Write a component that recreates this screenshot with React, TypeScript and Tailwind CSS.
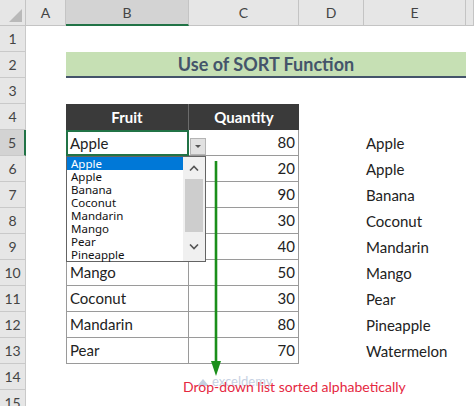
import React from 'react';

const COLS = ['A', 'B', 'C', 'D', 'E', ''];
// rows 6-9 of column B sit under the open drop-down list
const fruits = ['Apple', '', '', '', '', 'Mango', 'Coconut', 'Mandarin', 'Pear'];
const qty = [80, 20, 90, 30, 40, 50, 30, 80, 70];
const sorted = ['Apple', 'Apple', 'Banana', 'Coconut', 'Mandarin', 'Mango', 'Pear', 'Pineapple', 'Watermelon'];
const listItems = ['Apple', 'Apple', 'Banana', 'Coconut', 'Mandarin', 'Mango', 'Pear', 'Pineapple'];

const rowHead = 'flex items-center justify-center border-b border-r border-[#c9c9c9] bg-[#e6e6e6] text-[14px] text-[#444]';

export default function App() {
    const rows = Array.from({ length: 15 }, (_, i) => i + 1);

    return (
        <div className="relative w-[474px] h-[406px] overflow-hidden bg-white" style={{ fontFamily: 'Lato, "Open Sans", sans-serif' }}>
            <div className="grid grid-cols-[26px_40px_123px_110px_65px_102px_1fr] auto-rows-[26px]">
                {/* Corner */}
                <div className="relative border-b border-r border-[#c4c4c4] bg-[#e6e6e6]">
                    <div className="absolute right-[3px] bottom-[3px] w-0 h-0 border-l-[13px] border-l-transparent border-b-[13px] border-b-[#b9b9b9]" />
                </div>
                {COLS.map((c) => (
                    <div
                        key={c || 'F'}
                        className={`flex items-center justify-center border-r text-[14px] text-[#444] ${c === 'B'
                            ? 'bg-[#d3d3d3] border-b-2 border-b-[#217346] border-r-[#c4c4c4]'
                            : 'bg-[#e6e6e6] border-b border-b-[#c4c4c4] border-r-[#c4c4c4]'}`}
                    >
                        {c}
                    </div>
                ))}

                {rows.map((r) => {
                    const head = (
                        <div
                            key={`h${r}`}
                            className={r === 5
                                ? 'flex items-center justify-center border-b border-b-[#c9c9c9] border-r-2 border-r-[#217346] bg-[#d3d3d3] text-[14px] text-[#444]'
                                : rowHead}
                        >
                            {r}
                        </div>
                    );

                    if (r === 2) {
                        return (
                            <React.Fragment key={r}>
                                {head}
                                <div />
                                <div className="col-span-4 flex items-center justify-center bg-[#c6e0b4] border-b-2 border-[#44546a] text-[18px] font-bold text-[#44546a]">
                                    Use of SORT Function
                                </div>
                                <div />
                            </React.Fragment>
                        );
                    }

                    if (r === 4) {
                        return (
                            <React.Fragment key={r}>
                                {head}
                                <div />
                                <div className="flex items-center justify-center bg-[#3a3a3a] border-r border-[#6b6b6b] text-[15px] font-bold text-white">Fruit</div>
                                <div className="flex items-center justify-center bg-[#3a3a3a] text-[15px] font-bold text-white">Quantity</div>
                                <div />
                                <div />
                                <div />
                            </React.Fragment>
                        );
                    }

                    if (r >= 5 && r <= 13) {
                        const i = r - 5;
                        return (
                            <React.Fragment key={r}>
                                {head}
                                <div />
                                <div
                                    className={r === 5
                                        ? 'flex items-center pl-[2px] border-2 border-[#217346] text-[15px] text-[#222]'
                                        : 'flex items-center pl-[3px] border-l border-b border-r border-[#9a9a9a] text-[15px] text-[#222]'}
                                >
                                    {fruits[i]}
                                </div>
                                <div className="flex items-center justify-end pr-[3px] border-b border-r border-[#9a9a9a] text-[15px] text-[#222]">
                                    {qty[i]}
                                </div>
                                <div />
                                <div className="flex items-center pl-[2px] text-[15px] text-[#222]">{sorted[i]}</div>
                                <div />
                            </React.Fragment>
                        );
                    }

                    return (
                        <React.Fragment key={r}>
                            {head}
                            <div /><div /><div /><div /><div /><div />
                        </React.Fragment>
                    );
                })}
            </div>

            {/* Drop-down button */}
            <div className="absolute left-[190px] top-[138px] w-[16px] h-[17px] flex items-center justify-center bg-[#e1e1e1] border border-[#b4b4b4]">
                <div className="w-0 h-0 border-l-[3px] border-r-[3px] border-t-[3px] border-l-transparent border-r-transparent border-t-[#555]" />
            </div>

            {/* Drop-down list */}
            <div className="absolute left-[66px] top-[156px] w-[140px] h-[106px] flex bg-white border border-[#646464]" style={{ fontFamily: '"Noto Sans", sans-serif' }}>
                <div className="flex-1 flex flex-col">
                    {listItems.map((item, i) => (
                        <div
                            key={i}
                            className={`h-[13px] leading-[13px] pl-[4px] text-[11.5px] ${i === 0 ? 'bg-[#0078d7] text-white' : 'text-[#111]'}`}
                        >
                            {item}
                        </div>
                    ))}
                </div>
                <div className="w-[22px] flex flex-col bg-[#f0f0f0]">
                    <div className="h-[22px] flex items-center justify-center">
                        <svg width="10" height="6" viewBox="0 0 10 6" fill="none" stroke="#555" strokeWidth="1.6">
                            <path d="M1 5.5 L5 1.5 L9 5.5" />
                        </svg>
                    </div>
                    <div className="mx-auto w-[18px] h-[53px] bg-[#cdcdcd]" />
                    <div className="flex-1 flex items-center justify-center">
                        <svg width="10" height="6" viewBox="0 0 10 6" fill="none" stroke="#555" strokeWidth="1.6">
                            <path d="M1 0.5 L5 4.5 L9 0.5" />
                        </svg>
                    </div>
                </div>
            </div>

            {/* Green arrow */}
            <svg className="absolute left-[208px] top-[158px]" width="16" height="220" viewBox="0 0 16 220">
                <line x1="8" y1="3" x2="8" y2="206" stroke="#1b8f1b" strokeWidth="2.6" />
                <polygon points="3,203 13,203 8,218" fill="#1b8f1b" />
            </svg>

            {/* Watermark */}
            <div className="absolute left-[196px] top-[372px] flex items-center gap-[2px] text-[13px] text-[#9fb2cf] opacity-60">
                <svg width="14" height="10" viewBox="0 0 14 10">
                    <path d="M1 9 L7 2 L13 9 Z" fill="#9fb2cf" />
                </svg>
                <span>exceldemy</span>
            </div>

            {/* Annotation */}
            <div className="absolute left-[183px] top-[378px] text-[14px] leading-[18px] text-[#e5283f]">
                Drop-down list sorted alphabetically
            </div>
        </div>
    );
}
